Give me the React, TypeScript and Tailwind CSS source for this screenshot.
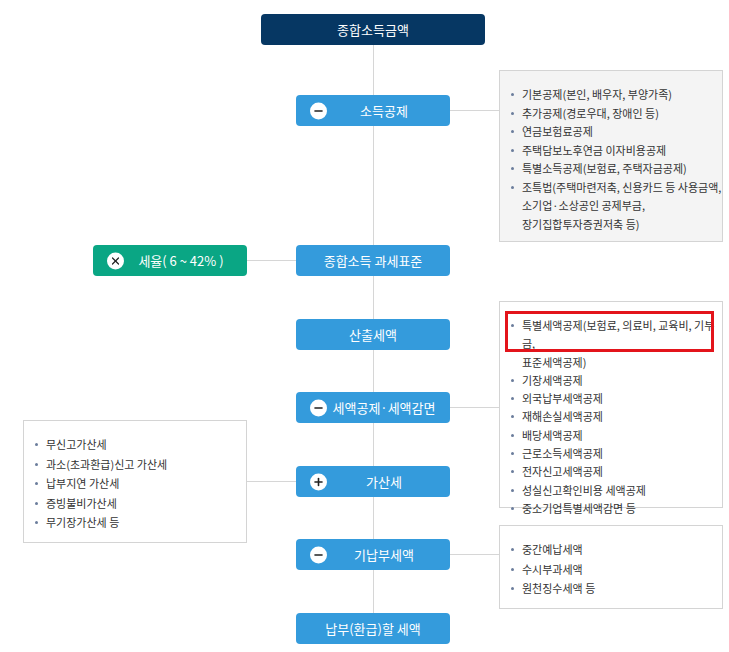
import React from "react";

const font = { fontFamily: '"Noto Sans CJK KR", "Noto Sans", sans-serif' };

function Icon({ kind }: { kind: "minus" | "plus" | "x" }) {
  return (
    <span className="absolute left-[14px] top-1/2 -translate-y-1/2 w-[17px] h-[17px] rounded-full bg-white flex items-center justify-center">
      <svg width="11" height="11" viewBox="0 0 11 11" stroke="#222" strokeWidth="1.6" strokeLinecap="round">
        {kind === "minus" && <line x1="2" y1="5.5" x2="9" y2="5.5" />}
        {kind === "plus" && (
          <>
            <line x1="2" y1="5.5" x2="9" y2="5.5" />
            <line x1="5.5" y1="2" x2="5.5" y2="9" />
          </>
        )}
        {kind === "x" && (
          <g strokeWidth="1.2">
            <line x1="2.5" y1="2.5" x2="8.5" y2="8.5" />
            <line x1="8.5" y1="2.5" x2="2.5" y2="8.5" />
          </g>
        )}
      </svg>
    </span>
  );
}

function Node({ top, left = 296, label, icon, color = "bg-[#349bdc]" }: { top: number; left?: number; label: string; icon?: "minus" | "plus" | "x"; color?: string }) {
  return (
    <div
      className={`absolute w-[154px] h-[31px] rounded-[4px] ${color} text-white text-[13px] flex items-center justify-center ${icon ? "pl-[22px]" : ""}`}
      style={{ top, left }}
    >
      {icon && <Icon kind={icon} />}
      {label}
    </div>
  );
}

function List({ items, gap }: { items: (string | string[])[]; gap: string }) {
  return (
    <ul className="flex flex-col">
      {items.map((it, i) => {
        const lines = Array.isArray(it) ? it : [it];
        return (
          <li key={i} className={`relative pl-[11px] text-[11px] text-[#333] ${gap}`}>
            <span className="absolute left-0 top-[8px] w-[3px] h-[3px] rounded-full bg-[#6b7d9c]" />
            {lines.map((l, j) => (
              <div key={j}>{l}</div>
            ))}
          </li>
        );
      })}
    </ul>
  );
}

export default function App() {
  return (
    <div className="relative w-[729px] h-[652px] bg-white overflow-hidden" style={font}>
      {/* lines */}
      <div className="absolute left-[373px] top-[45px] w-px h-[568px] bg-[#d6d6d6]" />
      <div className="absolute left-[450px] top-[110px] w-[49px] h-px bg-[#d6d6d6]" />
      <div className="absolute left-[247px] top-[260px] w-[49px] h-px bg-[#d6d6d6]" />
      <div className="absolute left-[450px] top-[407px] w-[49px] h-px bg-[#d6d6d6]" />
      <div className="absolute left-[246px] top-[481px] w-[50px] h-px bg-[#d6d6d6]" />
      <div className="absolute left-[450px] top-[554px] w-[49px] h-px bg-[#d6d6d6]" />

      <div className="absolute left-[261px] top-[14px] w-[224px] h-[31px] rounded-[4px] bg-[#063763] text-white text-[13px] flex items-center justify-center">
        종합소득금액
      </div>
      <Node top={95} label="소득공제" icon="minus" />
      <Node top={245} label="종합소득 과세표준" />
      <Node top={245} left={93} label="세율( 6 ~ 42% )" icon="x" color="bg-[#0aa684]" />
      <Node top={319} label="산출세액" />
      <Node top={392} label="세액공제·세액감면" icon="minus" />
      <Node top={466} label="가산세" icon="plus" />
      <Node top={539} label="기납부세액" icon="minus" />
      <Node top={613} label="납부(환급)할 세액" />

      <div className="absolute left-[499px] top-[70px] w-[224px] h-[172px] border border-[#d4d4d4] bg-[#f4f4f4] pl-[11px] pt-[14px]">
        <List
          gap="leading-[18.5px]"
          items={[
            "기본공제(본인, 배우자, 부양가족)",
            "추가공제(경로우대, 장애인 등)",
            "연금보험료공제",
            "주택담보노후연금 이자비용공제",
            "특별소득공제(보험료, 주택자금공제)",
            ["조특법(주택마련저축, 신용카드 등 사용금액,", "소기업·소상공인 공제부금,", "장기집합투자증권저축 등)"],
          ]}
        />
      </div>

      <div className="absolute left-[499px] top-[301px] w-[224px] h-[207px] border border-[#d4d4d4] bg-white pl-[11px] pt-[14px]">
        <List
          gap="leading-[18.3px]"
          items={[
            ["특별세액공제(보험료, 의료비, 교육비, 기부금,", "표준세액공제)"],
            "기장세액공제",
            "외국납부세액공제",
            "재해손실세액공제",
            "배당세액공제",
            "근로소득세액공제",
            "전자신고세액공제",
            "성실신고확인비용 세액공제",
            "중소기업특별세액감면 등",
          ]}
        />
        <div className="absolute left-[5px] top-[9px] w-[209px] h-[41px] border-[3px] border-[#e3141b]" />
      </div>

      <div className="absolute left-[499px] top-[525px] w-[224px] h-[84px] border border-[#d4d4d4] bg-white pl-[11px] pt-[14px]">
        <List gap="leading-[19.5px]" items={["중간예납세액", "수시부과세액", "원천징수세액 등"]} />
      </div>

      <div className="absolute left-[23px] top-[420px] w-[224px] h-[123px] border border-[#d4d4d4] bg-white pl-[11px] pt-[14px]">
        <List gap="leading-[19.5px]" items={["무신고가산세", "과소(초과환급)신고 가산세", "납부지연 가산세", "증빙불비가산세", "무기장가산세 등"]} />
      </div>
    </div>
  );
}
